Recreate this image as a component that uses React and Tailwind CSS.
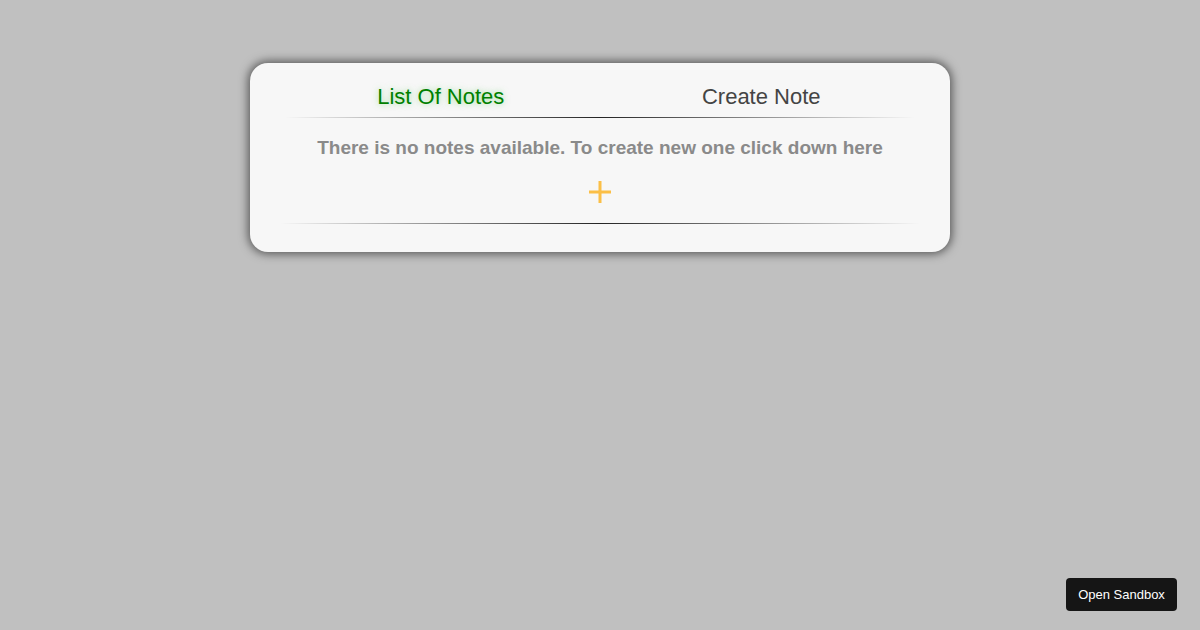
import React from "react";

export default function App() {
  return (
    <div className="relative min-h-[630px] w-full bg-[#c0c0c0] pt-[63px]" style={{ fontFamily: '"Liberation Sans", Arial, sans-serif' }}>
      <div className="mx-auto w-[700px] rounded-[18px] bg-[#f7f7f7] px-[32px] pb-[28px] pt-[20px] shadow-[0_0_10px_2px_rgba(0,0,0,0.55)]">
        <div className="flex">
          <div className="flex h-[27px] flex-1 items-center justify-center pl-[2px] text-[22px] text-[#008000] [text-shadow:0_0_6px_rgba(80,200,80,0.55)]">
            List Of Notes
          </div>
          <div className="flex h-[27px] flex-1 items-center justify-center pl-[7px] text-[22px] text-[#444]">
            Create Note
          </div>
        </div>
        <div className="mx-[3px] mt-[7px] h-px bg-[linear-gradient(to_right,rgba(0,0,0,0),rgba(0,0,0,0.85)_50%,rgba(0,0,0,0))]" />
        <div className="mt-[16px] text-center text-[19px] font-bold text-[#8a8a8a]">
          There is no notes available. To create new one click down here
        </div>
        <div className="mt-[18px] flex justify-center">
          <svg width="22" height="22" viewBox="0 0 22 22">
            <path d="M11 0v22M0 11h22" stroke="#fbbf47" strokeWidth="3" />
          </svg>
        </div>
        <div className="-mx-[2px] mt-[20px] h-px bg-[linear-gradient(to_right,rgba(0,0,0,0),rgba(0,0,0,0.85)_50%,rgba(0,0,0,0))]" />
      </div>
      <div className="absolute bottom-[19px] right-[23px] flex h-[33px] w-[111px] items-center justify-center rounded-[4px] bg-[#151515] text-[13px] text-white">
        Open Sandbox
      </div>
    </div>
  );
}
